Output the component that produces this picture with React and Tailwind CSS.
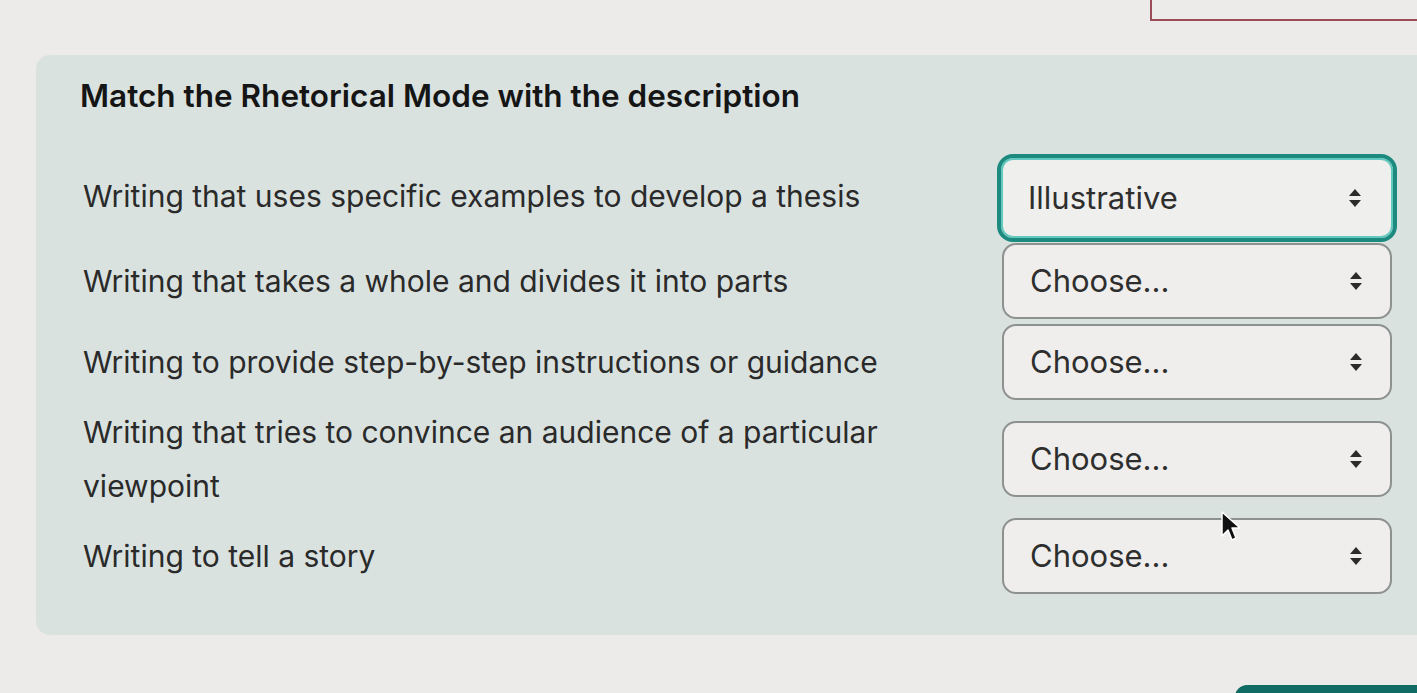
import React from "react";

const rows = [
  { label: "Writing that uses specific examples to develop a thesis", value: "Illustrative", active: true },
  { label: "Writing that takes a whole and divides it into parts", value: "Choose..." },
  { label: "Writing to provide step-by-step instructions or guidance", value: "Choose..." },
  { label: "Writing that tries to convince an audience of a particular viewpoint", value: "Choose..." },
  { label: "Writing to tell a story", value: "Choose..." },
];

const Arrows = () => (
  <svg width="16" height="24" viewBox="0 0 16 24" className="shrink-0">
    <path d="M8 3 L14 10 H2 Z" fill="#2b2b2b" />
    <path d="M8 21 L14 14 H2 Z" fill="#2b2b2b" />
  </svg>
);

const Select = ({ value, active }) =>
  active ? (
    <div className="w-[400px] h-[88px] -mb-[4px] rounded-[16px] border-[4px] border-[#1d8a80] ring-2 ring-inset ring-[#63c9be] bg-[#efefed] flex items-center justify-between pl-[27px] pr-[30px]">
      <span className="text-[31px] text-[#2e2e2e]">{value}</span>
      <Arrows />
    </div>
  ) : (
    <div className="w-[390px] h-[76px] mr-[5px] rounded-[14px] border-2 border-[#8d9291] bg-[#efeeec] flex items-center justify-between pl-[26px] pr-[26px]">
      <span className="text-[31px] text-[#2e2e2e]">{value}</span>
      <Arrows />
    </div>
  );

const App = () => {
  return (
    <div
      className="relative w-[1417px] h-[693px] overflow-hidden bg-[#ecebe9] text-[#262626]"
      style={{ fontFamily: "Inter, 'Liberation Sans', sans-serif" }}
    >
      <div className="flex justify-end h-[21px]">
        <div className="w-[267px] h-[21px] border-l-2 border-b-2 border-[#9a4d57]" />
      </div>

      <div className="ml-[36px] mt-[34px] h-[580px] rounded-l-[14px] bg-[#dae2e0] pl-[44px] pr-[20px] pt-[20px]">
        <h2 className="text-[31.5px] font-semibold text-[#151515] leading-[42px]">
          Match the Rhetorical Mode with the description
        </h2>
        <div className="mt-[37px] flex flex-col gap-[5px]">
          {rows.map((r, i) => (
            <div key={i} className="flex items-center justify-between">
              <div className="w-[860px] pl-[3px] text-[30px] leading-[54px] text-[#2a2a2a]">
                {r.label}
              </div>
              <Select value={r.value} active={r.active} />
            </div>
          ))}
        </div>
      </div>

      <div className="flex justify-end mt-[50px]">
        <div className="w-[182px] h-[20px] rounded-tl-[12px] bg-[#0f6b63]" />
      </div>

      <svg className="absolute left-[1220px] top-[510px]" width="22" height="34" viewBox="0 0 22 34">
        <path d="M2 2 L2 26 L8 20 L12 30 L16 28 L12 18 L20 18 Z" fill="#111" stroke="#fff" strokeWidth="1.5" strokeLinejoin="round" />
      </svg>
    </div>
  );
};

export default App;
